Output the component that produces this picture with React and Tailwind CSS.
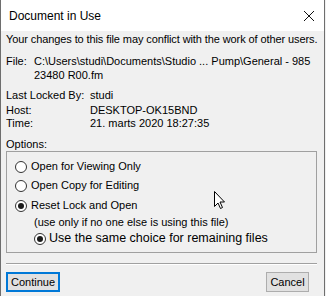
import React from 'react';

const sans = { fontFamily: '"Liberation Sans", Arial, sans-serif' };

const Radio = ({ checked }) => (
  <span className="w-[12px] h-[12px] rounded-full border border-[#333333] bg-white flex items-center justify-center shrink-0">
    {checked && <span className="w-[6px] h-[6px] rounded-full bg-[#1a1a1a]" />}
  </span>
);

const Option = ({ label, checked, className = '' }) => (
  <div className={`flex items-center gap-[4px] ${className}`}>
    <Radio checked={checked} />
    <span className="text-[11px] leading-[13px] text-black">{label}</span>
  </div>
);

export default function App() {
  return (
    <div className="w-[326px] h-[296px] bg-[#f0f0f0] relative overflow-hidden" style={sans}>
      <div className="w-[325px] h-[296px] border-l border-r border-[#6e6e6e] flex flex-col">
        <div className="h-[31px] bg-white flex items-center justify-between pl-[8px] pr-[9px] shrink-0">
          <span className="text-[12px] text-black">Document in Use</span>
          <svg width="12" height="12" viewBox="0 0 12 12">
            <path d="M1 1L11 11M11 1L1 11" stroke="#111" strokeWidth="1" />
          </svg>
        </div>

        <div className="flex flex-col px-[5px] text-[11px] leading-[13px] text-black">
          <p className="mt-[2px] whitespace-nowrap tracking-[-0.1px]">Your changes to this file may conflict with the work of other users.</p>

          <div className="flex mt-[8px] leading-[14px]">
            <span className="w-[28px] shrink-0">File:</span>
            <span>C:\Users\studi\Documents\Studio ... Pump\General - 985<br />23480 R00.fm</span>
          </div>

          <div className="grid grid-cols-[84px_1fr] mt-[7px]">
            <span className="mb-[2px]">Last Locked By:</span>
            <span className="mb-[2px]">studi</span>
            <span>Host:</span>
            <span>DESKTOP-OK15BND</span>
            <span>Time:</span>
            <span>21. marts 2020 18:27:35</span>
          </div>

          <p className="mt-[8px]">Options:</p>

          <div className="w-[311px] h-[102px] border border-[#a0a0a0] flex flex-col pl-[8px] pt-[8px]">
            <Option label="Open for Viewing Only" />
            <Option label="Open Copy for Editing" className="mt-[6px]" />
            <Option label="Reset Lock and Open" checked className="mt-[7px]" />
            <p className="ml-[19px] mt-[4px]">(use only if no one else is using this file)</p>
            <div className="flex items-center gap-[3px] ml-[19px] mt-[2px]">
              <Radio checked />
              <span className="text-[12.5px] leading-[15px]">Use the same choice for remaining files</span>
            </div>
          </div>

          <div className="mt-[10px] w-[311px] h-[2px] border-t border-[#a0a0a0] border-b border-b-white" />

          <div className="flex justify-between mt-[7px] w-[303px]">
            <button className="w-[54px] h-[20px] border-2 border-[#0078d7] bg-[#e1e1e1] text-[11px] leading-[14px]">Continue</button>
            <button className="w-[43px] h-[20px] border border-[#adadad] bg-[#e1e1e1] text-[11px] leading-[14px]">Cancel</button>
          </div>
        </div>
      </div>

      <svg className="absolute left-[214px] top-[191px]" width="12" height="19" viewBox="0 0 12 19">
        <path d="M0.5 0.5L0.5 15.5L4 12L6.5 17.5L8.5 16.5L6 11L10.5 11Z" fill="white" stroke="black" strokeWidth="1" />
      </svg>
    </div>
  );
}
